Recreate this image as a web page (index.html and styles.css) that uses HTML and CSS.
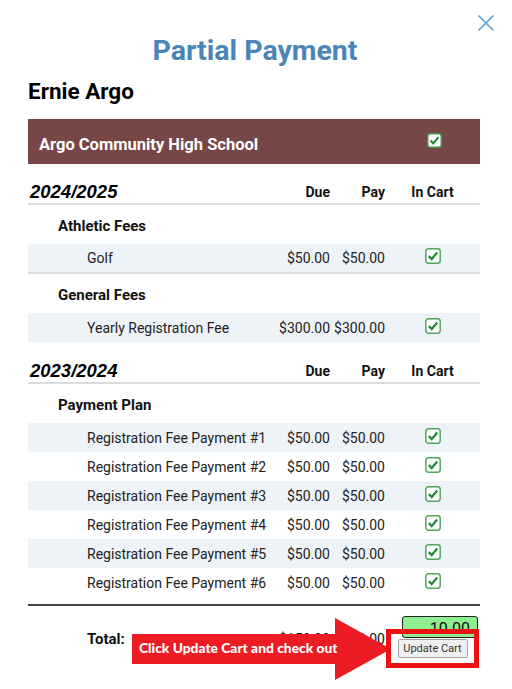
FILE: index.html
```html
<!DOCTYPE html>
<html lang="en">
<head>
<meta charset="utf-8">
<title>Partial Payment</title>
<link rel="stylesheet" href="styles.css">
</head>
<body>
<div class="modal">
  <button class="close" aria-label="Close">
    <svg width="18" height="18" viewBox="0 0 18 18"><path d="M1.5 1.5 L16.5 16.5 M16.5 1.5 L1.5 16.5" stroke="#5aa2d8" stroke-width="1.7" fill="none"/></svg>
  </button>
  <h1 class="title">Partial Payment</h1>
  <h2 class="student">Ernie Argo</h2>
  <div class="school">
    <span>Argo Community High School</span>
    <span class="cb"><svg width="15" height="15" viewBox="0 0 15 15"><rect x="0.75" y="0.75" width="13.5" height="13.5" rx="2.5" fill="#fff" stroke="#3e9c4b" stroke-width="1.5"/><path d="M3.6 7.6 L6.3 10.4 L11.4 4.2" stroke="#1e8a32" stroke-width="2.1" fill="none"/></svg></span>
  </div>

  <section class="year">
    <div class="grid year-head"><span class="yr">2024/2025</span><span class="num">Due</span><span class="num">Pay</span><span class="c">In Cart</span></div>
    <div class="group">Athletic Fees</div>
    <div class="grid row band sep"><span class="item">Golf</span><span class="num">$50.00</span><span class="num">$50.00</span><span class="c"><svg class="chk" width="16" height="16" viewBox="0 0 15 15"><rect x="0.75" y="0.75" width="13.5" height="13.5" rx="2.5" fill="#fff" stroke="#4fa85b" stroke-width="1.4"/><path d="M3.6 7.6 L6.3 10.4 L11.4 4.2" stroke="#1e8a32" stroke-width="2.1" fill="none"/></svg></span></div>
    <div class="group">General Fees</div>
    <div class="grid row band"><span class="item">Yearly Registration Fee</span><span class="num">$300.00</span><span class="num">$300.00</span><span class="c"><svg class="chk" width="16" height="16" viewBox="0 0 15 15"><rect x="0.75" y="0.75" width="13.5" height="13.5" rx="2.5" fill="#fff" stroke="#4fa85b" stroke-width="1.4"/><path d="M3.6 7.6 L6.3 10.4 L11.4 4.2" stroke="#1e8a32" stroke-width="2.1" fill="none"/></svg></span></div>
  </section>

  <section class="year">
    <div class="grid year-head"><span class="yr">2023/2024</span><span class="num">Due</span><span class="num">Pay</span><span class="c">In Cart</span></div>
    <div class="group">Payment Plan</div>
    <div class="grid row band"><span class="item">Registration Fee Payment #1</span><span class="num">$50.00</span><span class="num">$50.00</span><span class="c"><svg class="chk" width="16" height="16" viewBox="0 0 15 15"><rect x="0.75" y="0.75" width="13.5" height="13.5" rx="2.5" fill="#fff" stroke="#4fa85b" stroke-width="1.4"/><path d="M3.6 7.6 L6.3 10.4 L11.4 4.2" stroke="#1e8a32" stroke-width="2.1" fill="none"/></svg></span></div>
    <div class="grid row"><span class="item">Registration Fee Payment #2</span><span class="num">$50.00</span><span class="num">$50.00</span><span class="c"><svg class="chk" width="16" height="16" viewBox="0 0 15 15"><rect x="0.75" y="0.75" width="13.5" height="13.5" rx="2.5" fill="#fff" stroke="#4fa85b" stroke-width="1.4"/><path d="M3.6 7.6 L6.3 10.4 L11.4 4.2" stroke="#1e8a32" stroke-width="2.1" fill="none"/></svg></span></div>
    <div class="grid row band"><span class="item">Registration Fee Payment #3</span><span class="num">$50.00</span><span class="num">$50.00</span><span class="c"><svg class="chk" width="16" height="16" viewBox="0 0 15 15"><rect x="0.75" y="0.75" width="13.5" height="13.5" rx="2.5" fill="#fff" stroke="#4fa85b" stroke-width="1.4"/><path d="M3.6 7.6 L6.3 10.4 L11.4 4.2" stroke="#1e8a32" stroke-width="2.1" fill="none"/></svg></span></div>
    <div class="grid row"><span class="item">Registration Fee Payment #4</span><span class="num">$50.00</span><span class="num">$50.00</span><span class="c"><svg class="chk" width="16" height="16" viewBox="0 0 15 15"><rect x="0.75" y="0.75" width="13.5" height="13.5" rx="2.5" fill="#fff" stroke="#4fa85b" stroke-width="1.4"/><path d="M3.6 7.6 L6.3 10.4 L11.4 4.2" stroke="#1e8a32" stroke-width="2.1" fill="none"/></svg></span></div>
    <div class="grid row band"><span class="item">Registration Fee Payment #5</span><span class="num">$50.00</span><span class="num">$50.00</span><span class="c"><svg class="chk" width="16" height="16" viewBox="0 0 15 15"><rect x="0.75" y="0.75" width="13.5" height="13.5" rx="2.5" fill="#fff" stroke="#4fa85b" stroke-width="1.4"/><path d="M3.6 7.6 L6.3 10.4 L11.4 4.2" stroke="#1e8a32" stroke-width="2.1" fill="none"/></svg></span></div>
    <div class="grid row"><span class="item">Registration Fee Payment #6</span><span class="num">$50.00</span><span class="num">$50.00</span><span class="c"><svg class="chk" width="16" height="16" viewBox="0 0 15 15"><rect x="0.75" y="0.75" width="13.5" height="13.5" rx="2.5" fill="#fff" stroke="#4fa85b" stroke-width="1.4"/><path d="M3.6 7.6 L6.3 10.4 L11.4 4.2" stroke="#1e8a32" stroke-width="2.1" fill="none"/></svg></span></div>
  </section>

  <div class="grid total">
    <span class="item total-label">Total:</span>
    <span class="num">$150.00</span>
    <span class="num">$10.00</span>
    <span class="cart-actions">
      <input class="pay-input" type="text" value="10.00">
      <button class="update">Update Cart</button>
    </span>

    <div class="callout">
      <svg class="arrow" width="262" height="62" viewBox="0 0 262 62"><polygon points="0,16 203,16 203,0 259,31 203,62 203,46 0,46" fill="#ed1c24"/></svg>
      <span class="callout-text">Click Update Cart and check out</span>
    </div>
    <div class="highlight"></div>
  </div>
</div>
</body>
</html>
```

FILE: styles.css
```css
* { box-sizing: border-box; }
html, body { margin: 0; padding: 0; background: #fff; }
body {
  font-family: Roboto, "Liberation Sans", Arial, sans-serif;
  color: #111;
  width: 512px;
  height: 689px;
  overflow: hidden;
}
.modal {
  position: relative;
  padding: 34px 32px 0 28px;
}
.close {
  position: absolute;
  top: 14px;
  right: 17px;
  width: 18px;
  height: 18px;
  padding: 0;
  border: 0;
  background: none;
  line-height: 0;
}
.title {
  margin: 0;
  text-align: center;
  font-size: 28.5px;
  line-height: 34px;
  font-weight: 700;
  color: #4a85b7;
  padding-left: 2px;
}
.student {
  margin: 10px 0 0;
  font-size: 22.5px;
  line-height: 27px;
  font-weight: 700;
  color: #000;
}
.school {
  margin-top: 14px;
  height: 45px;
  background: #774646;
  color: #fff;
  display: flex;
  align-items: center;
  justify-content: space-between;
  padding: 0 38px 0 11px;
  font-size: 16.5px;
  font-weight: 700;
}
.school span:first-child { padding-top: 5px; }
.school .cb { line-height: 0; padding-bottom: 2px; }

.grid {
  display: grid;
  grid-template-columns: 247px 55px 55px 95px;
  align-items: center;
}
.num { text-align: right; white-space: nowrap; }
.c { text-align: center; line-height: 0; }

.year-head {
  margin-top: 17px;
  height: 24px;
  border-bottom: 2px solid #dcdcdc;
  font-size: 14px;
  font-weight: 700;
  color: #111;
}
.year-head .c { line-height: 22px; }
.year + .year .year-head { margin-top: 18px; }
.yr {
  font-family: "Liberation Sans", Arial, sans-serif;
  font-style: italic;
  font-size: 18.5px;
  font-weight: 700;
  padding-left: 2px;
  color: #000;
}
.group {
  padding: 3px 0 0 30px;
  line-height: 36px;
  font-size: 15px;
  font-weight: 700;
  color: #111;
}
.row {
  height: 29px;
  font-size: 14px;
  color: #222;
}
.row .chk { margin-bottom: 4px; }
.band { background: #eef3f8; }
.sep { border-bottom: 2px solid #dcdcdc; height: 30px; }
.item { padding-left: 59px; white-space: nowrap; }

.total {
  position: relative;
  margin-top: 7px;
  border-top: 2px solid #444;
  padding-top: 10px;
  font-size: 14px;
  color: #111;
}
.total-label { font-weight: 700; font-size: 15px; padding-top: 3px; }
.total .num { padding-top: 3px; }
.cart-actions {
  display: flex;
  flex-direction: column;
  align-items: center;
  gap: 1px;
}
.pay-input {
  align-self: flex-end;
  margin-right: 2px;
  width: 76px;
  height: 22px;
  background: #90ee90;
  border: 1.5px solid #222;
  border-radius: 3px;
  text-align: right;
  padding: 3px 7px 0 0;
  font-family: Roboto, "Liberation Sans", Arial, sans-serif;
  font-size: 16px;
  color: #111;
}
.update {
  width: 70px;
  height: 19px;
  padding: 0;
  background: #f0f0f0;
  border: 1px solid #a5a5a5;
  border-radius: 2px;
  font-family: Roboto, "Liberation Sans", Arial, sans-serif;
  font-size: 11px;
  color: #333;
}

.callout {
  position: absolute;
  left: 104px;
  top: 12px;
  width: 262px;
  height: 62px;
}
.arrow { display: block; }
.callout-text {
  position: absolute;
  left: 7px;
  top: 22px;
  line-height: 16px;
  font-family: Lato, "Open Sans", sans-serif;
  font-weight: 900;
  font-size: 13.8px;
  color: #fff;
  white-space: nowrap;
}
.highlight {
  position: absolute;
  left: 358px;
  top: 23px;
  width: 93px;
  height: 39px;
  border: 5px solid #ee1111;
}
```
